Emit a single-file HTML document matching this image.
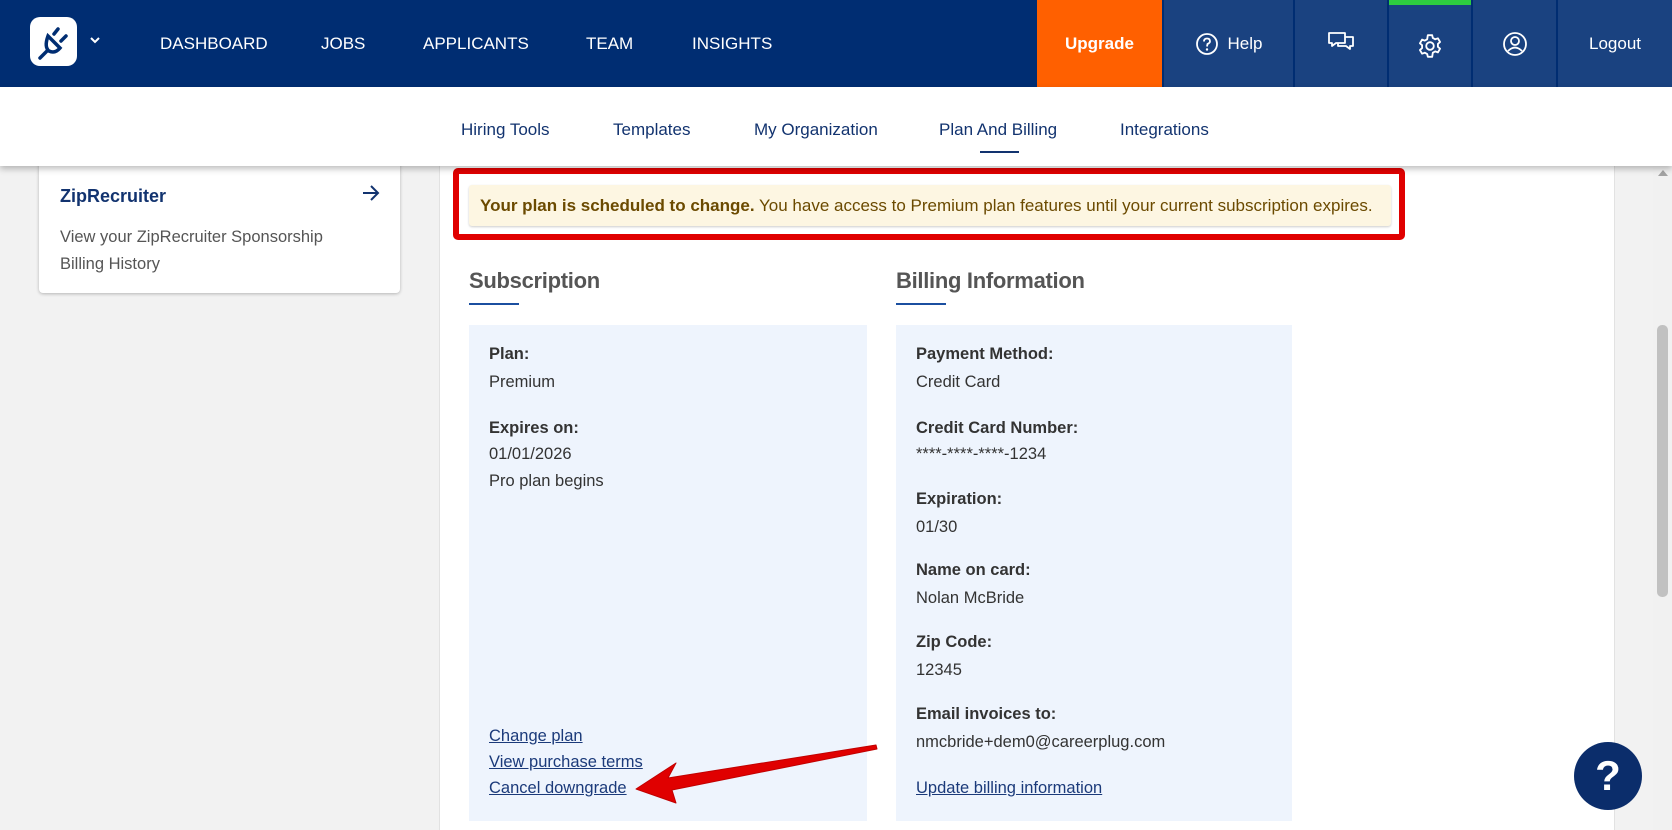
<!DOCTYPE html>
<html><head><meta charset="utf-8"><style>
*{box-sizing:border-box;margin:0;padding:0}
body{width:1672px;height:830px;overflow:hidden;background:#f2f2f2;font-family:"Liberation Sans",Arial,sans-serif;position:relative}
.nav{position:absolute;left:0;top:0;width:1672px;height:87px;background:#002d72}
.nav .it{position:absolute;top:34px;color:#fff;font-size:17px}
.blk{position:absolute;top:0;height:87px;background:#1a4280;color:#fff;font-size:17px;display:flex;align-items:center;justify-content:center}
.sub{position:absolute;left:0;top:87px;width:1672px;height:79px;background:#fff;box-shadow:0 3px 6px rgba(0,0,0,.25);z-index:5}
.sub span{position:absolute;top:33px;color:#12336f;font-size:17px}
.panel{position:absolute;left:439px;top:166px;width:1176px;height:664px;background:#fff;border-left:1px solid #e2e2e2;border-right:1px solid #e2e2e2}
.card{position:absolute;left:39px;top:150px;width:361px;height:143px;background:#fff;border-radius:4px;box-shadow:0 1px 3px rgba(0,0,0,.25)}
.t{position:absolute;font-size:16.5px;color:#333}
.b{font-weight:bold;color:#333}
.box{position:absolute;top:325px;height:496px;background:#eef4fd}
a{color:#1b3a7a;text-decoration:underline;position:absolute;font-size:16.5px}
h2{position:absolute;top:268px;font-size:22px;font-weight:bold;color:#555;letter-spacing:-0.3px}
.ul{position:absolute;top:303px;width:50px;height:2px;background:#1b4fa0}
</style></head><body>
<div class="nav">
 <div style="position:absolute;left:30px;top:17px;width:47px;height:49px;background:#fff;border-radius:10px"></div>
 <svg style="position:absolute;left:30px;top:17px" width="47" height="49" viewBox="0 0 47 49"><g fill="none" stroke="#002d72" stroke-width="3.5" stroke-linecap="round"><path d="M10 41 L17 34"/><path d="M18 19 L30 31 Q25 37 19 34 Q14 30 18 19Z"/><path d="M24 17 L28 12 M31 24 L36 19"/></g></svg>
 <svg style="position:absolute;left:89px;top:36px" width="12" height="9"><path d="M2 2 L6 6 L10 2" stroke="#fff" stroke-width="2" fill="none"/></svg>
 <span class="it" style="left:160px">DASHBOARD</span>
 <span class="it" style="left:321px">JOBS</span>
 <span class="it" style="left:423px">APPLICANTS</span>
 <span class="it" style="left:586px">TEAM</span>
 <span class="it" style="left:692px">INSIGHTS</span>
 <div class="blk" style="left:1037px;width:125px;background:#ff6000;font-weight:bold">Upgrade</div>
 <div class="blk" style="left:1164px;width:129px"><svg width="24" height="24" style="margin-right:9px"><circle cx="12" cy="12" r="10" stroke="#fff" stroke-width="1.8" fill="none"/><path d="M9 9.5 Q9 6.5 12 6.5 Q15 6.5 15 9.3 Q15 11 12.5 12 L12 14.5" stroke="#fff" stroke-width="1.8" fill="none"/><circle cx="12" cy="17.5" r="1.2" fill="#fff"/></svg>Help</div>
 <div class="blk" style="left:1295px;width:92px"><svg width="28" height="26"><path d="M2 2h16v10H9l-4 3v-3H2z M11 12v3h8l4 3v-3h3V6h-8" stroke="#fff" stroke-width="1.8" fill="none" stroke-linejoin="round"/></svg></div>
 <div class="blk" style="left:1389px;width:82px;border-top:5px solid #2ecc40"><svg width="26" height="26" viewBox="0 0 24 24"><path d="M12 8.5a3.5 3.5 0 1 0 0 7a3.5 3.5 0 1 0 0-7z M10 2h4l.6 2.6 2.2 1.2 2.5-.9 2 3.4-2 1.8v2.6l2 1.8-2 3.4-2.5-.9-2.2 1.2L14 22h-4l-.6-2.6-2.2-1.2-2.5.9-2-3.4 2-1.8v-2.6l-2-1.8 2-3.4 2.5.9 2.2-1.2z" stroke="#fff" stroke-width="1.7" fill="none" stroke-linejoin="round"/></svg></div>
 <div class="blk" style="left:1473px;width:83px"><svg width="26" height="26"><circle cx="13" cy="13" r="11" stroke="#fff" stroke-width="1.8" fill="none"/><circle cx="13" cy="10" r="4" stroke="#fff" stroke-width="1.8" fill="none"/><path d="M6 20 Q13 13 20 20" stroke="#fff" stroke-width="1.8" fill="none"/></svg></div>
 <div class="blk" style="left:1558px;width:114px">Logout</div>
</div>
<div class="sub">
 <span style="left:461px">Hiring Tools</span>
 <span style="left:613px">Templates</span>
 <span style="left:754px">My Organization</span>
 <span style="left:939px">Plan And Billing</span>
 <span style="left:1120px">Integrations</span>
 <div style="position:absolute;left:980px;top:64px;width:39px;height:2px;background:#12336f"></div>
</div>
<div class="card">
 <div class="t" style="left:21px;top:36px;color:#12336f;font-weight:bold;font-size:18px">ZipRecruiter</div>
 <svg style="position:absolute;left:322px;top:33px" width="20" height="20"><path d="M2 10h15M10 3l7 7-7 7" stroke="#12336f" stroke-width="2" fill="none"/></svg>
 <div class="t" style="left:21px;top:74px;color:#555;line-height:27px">View your ZipRecruiter Sponsorship<br>Billing History</div>
</div>
<div class="panel"></div>
<div style="position:absolute;left:1653px;top:166px;width:19px;height:664px;background:#f1f1f1"></div>
<div style="position:absolute;left:1657px;top:325px;width:11px;height:272px;background:#c1c1c1;border-radius:5px"></div>
<svg style="position:absolute;left:1656px;top:168px" width="14" height="10"><path d="M2 8L7 2L12 8Z" fill="#a3a3a3"/></svg>
<div style="position:absolute;left:453px;top:168px;width:952px;height:72px;border:6px solid #e00000;border-radius:5px;background:#fff"></div>
<div style="position:absolute;left:469px;top:185px;width:922px;height:41px;background:#fdf6e2;border-radius:3px;box-shadow:0 1px 2px rgba(0,0,0,.2);color:#6b4a00;font-size:17px;padding:11px 0 0 11px;white-space:nowrap"><b>Your plan is scheduled to change.</b> You have access to Premium plan features until your current subscription expires.</div>
<h2 style="left:469px">Subscription</h2><div class="ul" style="left:469px"></div>
<h2 style="left:896px">Billing Information</h2><div class="ul" style="left:896px"></div>
<div class="box" style="left:469px;width:398px"></div>
<div class="box" style="left:896px;width:396px"></div>
<div class="t b" style="left:489px;top:345px">Plan:</div>
<div class="t" style="left:489px;top:373px">Premium</div>
<div class="t b" style="left:489px;top:419px">Expires on:</div>
<div class="t" style="left:489px;top:445px">01/01/2026</div>
<div class="t" style="left:489px;top:472px">Pro plan begins</div>
<a style="left:489px;top:727px">Change plan</a>
<a style="left:489px;top:753px">View purchase terms</a>
<a style="left:489px;top:779px">Cancel downgrade</a>
<div class="t b" style="left:916px;top:345px">Payment Method:</div>
<div class="t" style="left:916px;top:373px">Credit Card</div>
<div class="t b" style="left:916px;top:419px">Credit Card Number:</div>
<div class="t" style="left:916px;top:445px">****-****-****-1234</div>
<div class="t b" style="left:916px;top:490px">Expiration:</div>
<div class="t" style="left:916px;top:518px">01/30</div>
<div class="t b" style="left:916px;top:561px">Name on card:</div>
<div class="t" style="left:916px;top:589px">Nolan McBride</div>
<div class="t b" style="left:916px;top:633px">Zip Code:</div>
<div class="t" style="left:916px;top:661px">12345</div>
<div class="t b" style="left:916px;top:705px">Email invoices to:</div>
<div class="t" style="left:916px;top:733px">nmcbride+dem0@careerplug.com</div>
<a style="left:916px;top:779px">Update billing information</a>
<svg style="position:absolute;left:0;top:0" width="1672" height="830"><path d="M876 745 L668 778 L676 763 L636 789 L676 803 L672 790 L877 749Z" fill="#e00000" stroke="#c00000" stroke-width="1" stroke-linejoin="round"/></svg>
<div style="position:absolute;left:1574px;top:742px;width:68px;height:68px;border-radius:50%;background:#0b2d6b;color:#fff;font-size:42px;font-weight:bold;text-align:center;line-height:68px">?</div>
</body></html>
